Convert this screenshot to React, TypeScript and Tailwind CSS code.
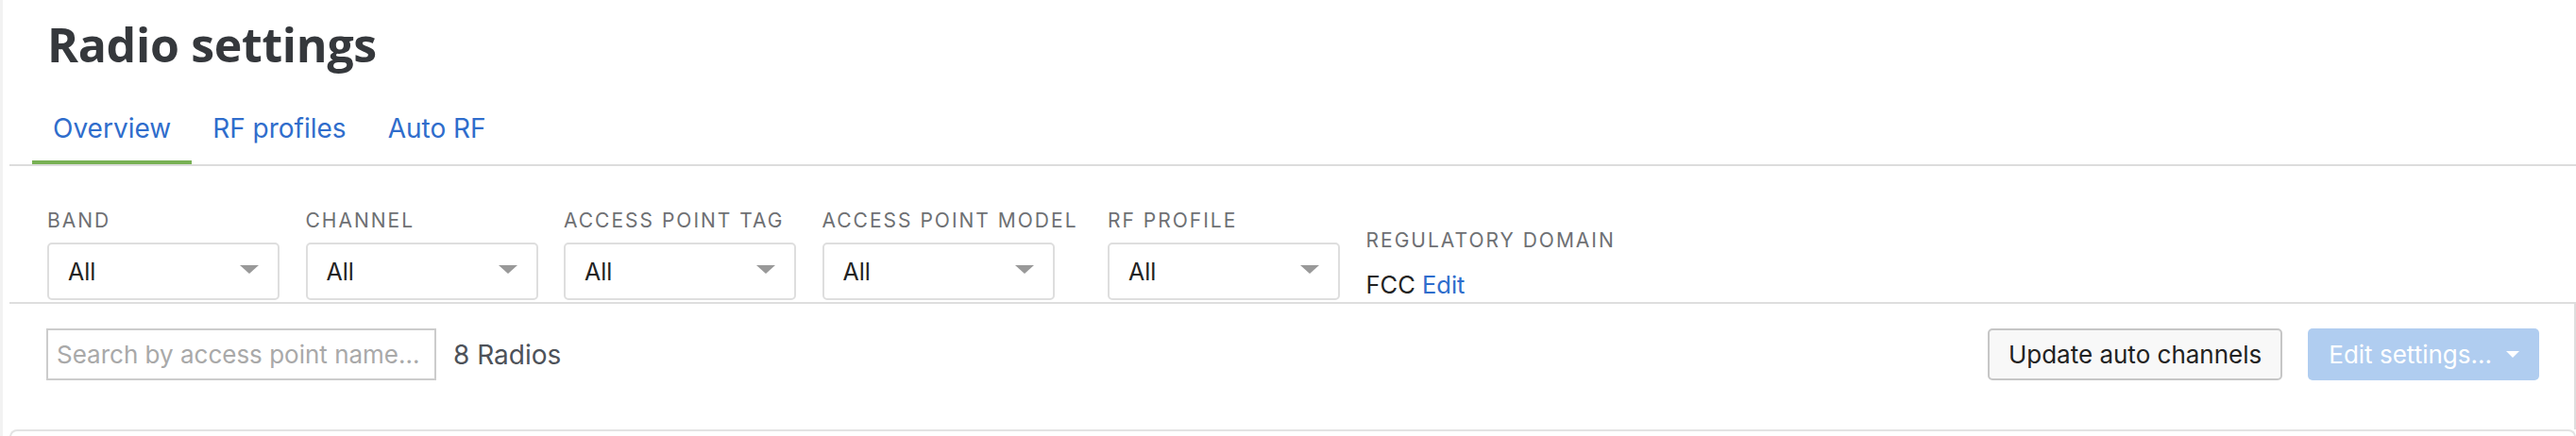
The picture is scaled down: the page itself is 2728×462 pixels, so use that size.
const tabs = [
  { label: 'Overview', active: true },
  { label: 'RF profiles', active: false },
  { label: 'Auto RF', active: false },
];

const filters = [
  { label: 'Band', width: 'w-[246px]' },
  { label: 'Channel', width: 'w-[246px]' },
  { label: 'Access point tag', width: 'w-[246px]' },
  { label: 'Access point model', width: 'w-[275px]' },
  { label: 'RF profile', width: 'w-[246px]' },
];

function FilterSelect({ label, width }: { label: string; width: string }) {
  return (
    <div className={`${width} flex flex-col`}>
      <div className="text-[21px] leading-[24px] tracking-[2px] uppercase text-[#6e7073] whitespace-nowrap">
        {label}
      </div>
      <div className="mt-[11px] w-[246px] h-[61px] border-2 border-[#dedede] rounded-[5px] pl-[20px] pr-[20px] flex items-center justify-between">
        <span className="text-[25px] leading-[30px] text-[#222222]">All</span>
        <span className="mb-[5px] w-0 h-0 border-l-[10.5px] border-r-[10.5px] border-t-[9px] border-l-transparent border-r-transparent border-t-[#999999]" />
      </div>
    </div>
  );
}

export default function App() {
  return (
    <div className="w-[2728px] h-[462px] overflow-hidden bg-white border-l-[3px] border-[#f2f2f2] font-['Inter',sans-serif]">
      <div className="ml-[7px]">
        <div className="h-[78px] pt-[17px] pl-[40px]">
          <h1 className="font-['Open_Sans',sans-serif] font-bold text-[50px] leading-[60px] tracking-[-0.3px] text-[#35383c]">
            Radio settings
          </h1>
        </div>

        <nav className="flex pl-[24px] pt-[38px] border-b-2 border-[#dcdcdc]">
          {tabs.map((tab) => (
            <div
              key={tab.label}
              className={`px-[22px] pb-[14px] border-b-4 text-[28px] leading-[40px] text-[#2f6dcc] ${
                tab.active ? 'border-[#78b154]' : 'border-transparent'
              }`}
            >
              {tab.label}
            </div>
          ))}
        </nav>

        <div className="flex gap-[27.5px] pl-[40px] pt-[46px] pb-[2px]">
          {filters.map((f) => (
            <FilterSelect key={f.label} label={f.label} width={f.width} />
          ))}
          <div className="flex flex-col pt-[21px]">
            <div className="text-[21px] leading-[24px] tracking-[2px] uppercase text-[#6e7073] whitespace-nowrap">
              Regulatory domain
            </div>
            <div className="mt-[20px] text-[25.5px] leading-[30px] text-[#222222]">
              FCC <span className="text-[#2f6dcc]">Edit</span>
            </div>
          </div>
        </div>

        <div className="h-[135px] border-t-2 border-r-2 border-[#dedede] pl-[39px] pr-[37px] pt-[26px] flex items-start justify-between">
          <div className="flex items-center">
            <input
              type="text"
              placeholder="Search by access point name..."
              className="w-[413px] h-[55px] border-2 border-[#cccccc] px-[9px] text-[26px] text-[#222222] placeholder:text-[#a9a9a9] outline-none"
            />
            <span className="ml-[18px] text-[28px] leading-[34px] text-[#4d5259]">8 Radios</span>
          </div>
          <div className="flex gap-[27px]">
            <button className="h-[55px] px-[20px] border-2 border-[#c6c6c6] bg-[#f8f8f8] rounded-[5px] text-[26px] text-[#222222]">
              Update auto channels
            </button>
            <button className="h-[55px] pl-[22px] pr-[21px] bg-[#b0cdf0] rounded-[5px] text-[26px] text-white flex items-center gap-[15px]">
              <span>Edit settings...</span>
              <span className="w-0 h-0 border-l-[7px] border-r-[7px] border-t-[7px] border-l-transparent border-r-transparent border-t-white" />
            </button>
          </div>
        </div>

        <div className="h-[20px] border-2 border-b-0 border-[#e3e3e3] rounded-t-[8px]" />
      </div>
    </div>
  );
}
